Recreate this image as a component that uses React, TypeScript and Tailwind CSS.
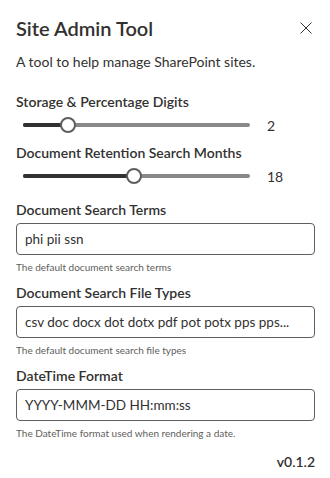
import React from 'react';

const font = { fontFamily: 'Lato, "Noto Sans", sans-serif' };

interface SliderRowProps {
  percent: number;
  value: string;
}

const SliderRow: React.FC<SliderRowProps> = ({ percent, value }) => {
  return (
    <div className="flex items-center h-[26px]">
      <div className="relative ml-[7px] w-[227px] h-[4px] rounded-full bg-[#8a8886]">
        <div className="absolute left-0 top-0 h-[4px] rounded-full bg-[#323130]" style={{ width: `${percent}%` }} />
        <div
          className="absolute top-1/2 w-[16px] h-[16px] -translate-x-1/2 -translate-y-1/2 rounded-full bg-white border-2 border-[#605e5c]"
          style={{ left: `${percent}%` }}
        />
      </div>
      <span className="ml-[17px] text-[14px] text-[#323130]">{value}</span>
    </div>
  );
};

interface FieldProps {
  label: string;
  value: string;
  help: string;
}

const Field: React.FC<FieldProps> = ({ label, value, help }) => {
  return (
    <div>
      <div className="h-[20px] leading-[20px] text-[14px] font-semibold text-[#323130]">{label}</div>
      <div className="mt-[3px] h-[32px] flex items-center px-[8px] border border-[#605e5c] rounded-[4px]">
        <span className="text-[13.5px] text-[#323130] whitespace-nowrap">{value}</span>
      </div>
      <div className="mt-[5px] h-[14px] leading-[14px] text-[10px] text-[#605e5c]">{help}</div>
    </div>
  );
};

export default function App() {
  return (
    <div className="w-[330px] h-[478px] bg-white pl-4 pr-[15px] pt-[14px]" style={font}>
      {/* Header */}
      <div className="flex items-center justify-between h-[28px]">
        <h1 className="text-[20px] font-semibold text-[#323130] leading-[28px]">Site Admin Tool</h1>
        <svg width="12" height="12" viewBox="0 0 12 12" className="mr-[3px]">
          <path d="M0.5 0.5 L11.5 11.5 M11.5 0.5 L0.5 11.5" stroke="#323130" strokeWidth="1" />
        </svg>
      </div>

      <p className="mt-[10px] text-[14px] leading-[20px] text-[#323130]">A tool to help manage SharePoint sites.</p>

      {/* Sliders */}
      <div className="mt-[20px] h-[20px] leading-[20px] text-[14px] font-semibold text-[#323130]">
        Storage &amp; Percentage Digits
      </div>
      <SliderRow percent={20} value="2" />

      <div className="mt-[5px] h-[20px] leading-[20px] text-[14px] font-semibold text-[#323130]">
        Document Retention Search Months
      </div>
      <SliderRow percent={49} value="18" />

      {/* Text fields */}
      <div className="mt-[11px] flex flex-col gap-[9px]">
        <Field label="Document Search Terms" value="phi pii ssn" help="The default document search terms" />
        <Field
          label="Document Search File Types"
          value="csv doc docx dot dotx pdf pot potx pps pps..."
          help="The default document search file types"
        />
        <Field
          label="DateTime Format"
          value="YYYY-MMM-DD HH:mm:ss"
          help="The DateTime format used when rendering a date."
        />
      </div>

      <div className="mt-[11px] text-right text-[14px] font-semibold text-[#323130]">v0.1.2</div>
    </div>
  );
}
